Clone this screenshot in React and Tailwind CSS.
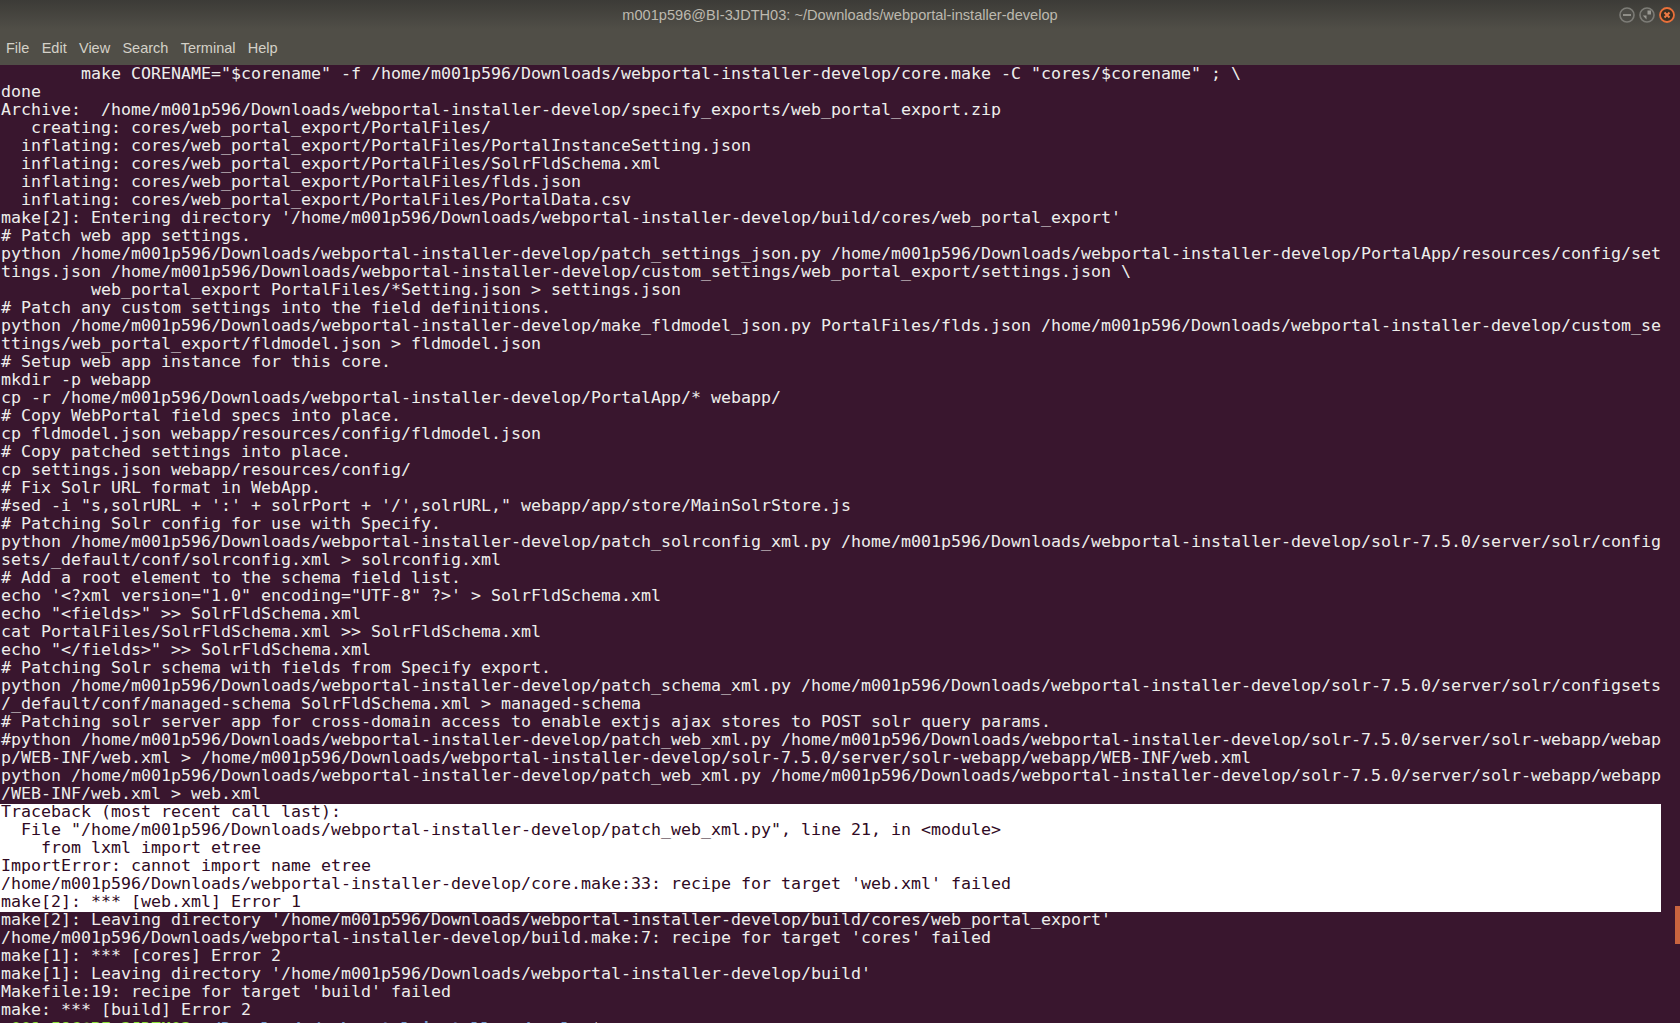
const HOME = "/home/m001p596/Downloads/webportal-installer-develop";

const beforeError = [
  `        make CORENAME="$corename" -f ${HOME}/core.make -C "cores/$corename" ; \\`,
  "done",
  `Archive:  ${HOME}/specify_exports/web_portal_export.zip`,
  "   creating: cores/web_portal_export/PortalFiles/",
  "  inflating: cores/web_portal_export/PortalFiles/PortalInstanceSetting.json",
  "  inflating: cores/web_portal_export/PortalFiles/SolrFldSchema.xml",
  "  inflating: cores/web_portal_export/PortalFiles/flds.json",
  "  inflating: cores/web_portal_export/PortalFiles/PortalData.csv",
  `make[2]: Entering directory '${HOME}/build/cores/web_portal_export'`,
  "# Patch web app settings.",
  `python ${HOME}/patch_settings_json.py ${HOME}/PortalApp/resources/config/set`,
  `tings.json ${HOME}/custom_settings/web_portal_export/settings.json \\`,
  "         web_portal_export PortalFiles/*Setting.json > settings.json",
  "# Patch any custom settings into the field definitions.",
  `python ${HOME}/make_fldmodel_json.py PortalFiles/flds.json ${HOME}/custom_se`,
  "ttings/web_portal_export/fldmodel.json > fldmodel.json",
  "# Setup web app instance for this core.",
  "mkdir -p webapp",
  `cp -r ${HOME}/PortalApp/* webapp/`,
  "# Copy WebPortal field specs into place.",
  "cp fldmodel.json webapp/resources/config/fldmodel.json",
  "# Copy patched settings into place.",
  "cp settings.json webapp/resources/config/",
  "# Fix Solr URL format in WebApp.",
  `#sed -i "s,solrURL + ':' + solrPort + '/',solrURL," webapp/app/store/MainSolrStore.js`,
  "# Patching Solr config for use with Specify.",
  `python ${HOME}/patch_solrconfig_xml.py ${HOME}/solr-7.5.0/server/solr/config`,
  "sets/_default/conf/solrconfig.xml > solrconfig.xml",
  "# Add a root element to the schema field list.",
  `echo '<?xml version="1.0" encoding="UTF-8" ?>' > SolrFldSchema.xml`,
  `echo "<fields>" >> SolrFldSchema.xml`,
  "cat PortalFiles/SolrFldSchema.xml >> SolrFldSchema.xml",
  `echo "</fields>" >> SolrFldSchema.xml`,
  "# Patching Solr schema with fields from Specify export.",
  `python ${HOME}/patch_schema_xml.py ${HOME}/solr-7.5.0/server/solr/configsets`,
  "/_default/conf/managed-schema SolrFldSchema.xml > managed-schema",
  "# Patching solr server app for cross-domain access to enable extjs ajax stores to POST solr query params.",
  `#python ${HOME}/patch_web_xml.py ${HOME}/solr-7.5.0/server/solr-webapp/webap`,
  `p/WEB-INF/web.xml > ${HOME}/solr-7.5.0/server/solr-webapp/webapp/WEB-INF/web.xml`,
  `python ${HOME}/patch_web_xml.py ${HOME}/solr-7.5.0/server/solr-webapp/webapp`,
  "/WEB-INF/web.xml > web.xml",
];

const errorLines = [
  "Traceback (most recent call last):",
  `  File "${HOME}/patch_web_xml.py", line 21, in <module>`,
  "    from lxml import etree",
  "ImportError: cannot import name etree",
  `${HOME}/core.make:33: recipe for target 'web.xml' failed`,
  "make[2]: *** [web.xml] Error 1",
];

const afterError = [
  `make[2]: Leaving directory '${HOME}/build/cores/web_portal_export'`,
  `${HOME}/build.make:7: recipe for target 'cores' failed`,
  "make[1]: *** [cores] Error 2",
  `make[1]: Leaving directory '${HOME}/build'`,
  "Makefile:19: recipe for target 'build' failed",
  "make: *** [build] Error 2",
];

const menus = ["File", "Edit", "View", "Search", "Terminal", "Help"];

const Row = ({ children }) => <div className="h-[18px]">{children}</div>;

const WindowButtons = () => (
  <div className="flex gap-1">
    <svg width="16" height="16" viewBox="0 0 16 16">
      <circle cx="8" cy="8" r="7" fill="#4c4b46" stroke="#7d7c77" strokeWidth="1.6" />
      <rect x="4" y="7" width="8" height="2" fill="#8f8e88" />
    </svg>
    <svg width="16" height="16" viewBox="0 0 16 16">
      <circle cx="8" cy="8" r="7" fill="#4c4b46" stroke="#7d7c77" strokeWidth="1.6" />
      <path d="M8.5 3.5 12 3.5 12 7.5 8.5 7.5Z M3.8 8.5 7.5 8.5 7.5 12.5Z" fill="#9a9993" />
    </svg>
    <svg width="16" height="16" viewBox="0 0 16 16">
      <circle cx="8" cy="8" r="7" fill="#3a2f22" stroke="#e9703a" strokeWidth="1.8" />
      <path d="M5.5 5.5 10.5 10.5 M10.5 5.5 5.5 10.5" stroke="#ee7b45" strokeWidth="2" />
    </svg>
  </div>
);

const App = () => {
  return (
    <div className="relative flex h-[1023px] flex-col overflow-hidden bg-[#39162e] font-['Liberation_Sans',sans-serif]">
      <header className="h-[65px] shrink-0 bg-[linear-gradient(#3c3b37,#504e47_45%,#504e47)]">
        <div className="relative flex h-[30px] items-center justify-center pt-px text-[14.6px] text-[#bdb9af]">
          <span>m001p596@BI-3JDTH03: ~/Downloads/webportal-installer-develop</span>
          <div className="absolute top-[7px] right-[5px]">
            <WindowButtons />
          </div>
        </div>
        <nav className="flex h-[35px] items-center gap-[12.3px] pt-[2px] pl-[6px] text-[14.5px] text-[#d4d1c8]">
          {menus.map((m) => (
            <span key={m}>{m}</span>
          ))}
        </nav>
      </header>

      <main className="w-[1661px] pt-px pl-px font-['DejaVu_Sans_Mono',monospace] text-[16.62px] leading-[16px] whitespace-pre text-[#eeeeec]">
        {beforeError.map((line, i) => (
          <Row key={i}>{line}</Row>
        ))}
        <div className="-ml-px bg-white pl-px text-[#300a24]">
          {errorLines.map((line, i) => (
            <Row key={i}>{line}</Row>
          ))}
        </div>
        {afterError.map((line, i) => (
          <Row key={i}>{line}</Row>
        ))}
        {/* prompt only peeks in at the bottom edge */}
        <div className="h-[18px] pt-px">
          <span className="font-bold text-[#8ae234]">m001p596@BI-3JDTH03</span>
          :
          <span className="font-bold text-[#729fcf]">~/Downloads/webportal-installer-develop</span>$
        </div>
      </main>

      {/* scrollbar thumb */}
      <div className="absolute top-[906px] right-0 h-[38px] w-[5px] bg-[#c8643f]" />
    </div>
  );
};

export default App;
